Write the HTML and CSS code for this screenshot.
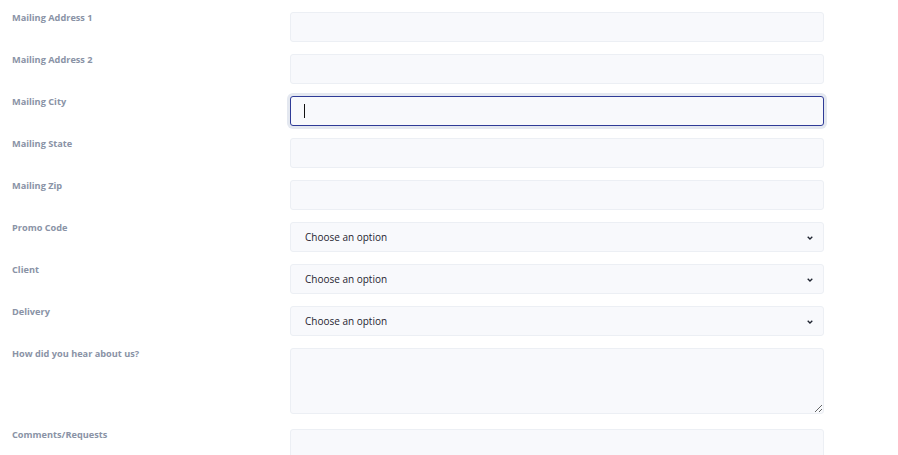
FILE: index.html
```html
<!DOCTYPE html>
<html>
<head>
<meta charset="utf-8">
<link rel="stylesheet" href="styles.css">
</head>
<body>
<form class="form">
  <div class="row"><label class="label">Mailing Address 1</label><input class="field" type="text"></div>
  <div class="row"><label class="label">Mailing Address 2</label><input class="field" type="text"></div>
  <div class="row"><label class="label">Mailing City</label><div class="wrap"><input class="field focused" type="text"><span class="caret"></span></div></div>
  <div class="row"><label class="label">Mailing State</label><input class="field" type="text"></div>
  <div class="row"><label class="label">Mailing Zip</label><input class="field" type="text"></div>
  <div class="row"><label class="label">Promo Code</label>
    <div class="select">Choose an option<svg class="chev" viewBox="0 0 6 4" width="6" height="4"><path d="M0.7 0.7 L3 3 L5.3 0.7" fill="none" stroke="#1f2430" stroke-width="1.3"/></svg></div></div>
  <div class="row"><label class="label">Client</label>
    <div class="select">Choose an option<svg class="chev" viewBox="0 0 6 4" width="6" height="4"><path d="M0.7 0.7 L3 3 L5.3 0.7" fill="none" stroke="#1f2430" stroke-width="1.3"/></svg></div></div>
  <div class="row"><label class="label">Delivery</label>
    <div class="select">Choose an option<svg class="chev" viewBox="0 0 6 4" width="6" height="4"><path d="M0.7 0.7 L3 3 L5.3 0.7" fill="none" stroke="#1f2430" stroke-width="1.3"/></svg></div></div>
  <div class="row tall"><label class="label">How did you hear about us?</label><textarea class="field area"></textarea></div>
  <div class="row"><label class="label">Comments/Requests</label><textarea class="field area"></textarea></div>
</form>
</body>
</html>
```
FILE: styles.css
```css
html, body {
  margin: 0;
  padding: 0;
  background: #ffffff;
  overflow: hidden;
}
body {
  font-family: "Open Sans", "Liberation Sans", sans-serif;
}
.form {
  padding: 12px 0 0 12px;
  display: flex;
  flex-direction: column;
  gap: 12px;
}
.row {
  display: grid;
  grid-template-columns: 278px 534px;
  align-items: start;
}
.row.tall {
  margin-bottom: 3px;
}
.label {
  font-size: 9.2px;
  line-height: 13px;
  font-weight: 700;
  color: #8a93a6;
  margin-top: -1px;
}
.wrap {
  position: relative;
}
.caret {
  position: absolute;
  left: 14px;
  top: 8px;
  width: 1px;
  height: 14px;
  background: #111;
}
.field {
  box-sizing: border-box;
  display: block;
  width: 534px;
  height: 30px;
  margin: 0;
  padding: 0 14px;
  background: #f8f9fc;
  border: 1px solid #eceff4;
  border-radius: 3px;
  font-family: "Open Sans", sans-serif;
  font-size: 11px;
  color: #1f2430;
  outline: none;
}
.field.focused {
  border-color: #2f3b97;
  box-shadow: 0 0 0 3px #e4e8f0;
}
.area {
  height: 66px;
  resize: vertical;
}
.select {
  box-sizing: border-box;
  width: 534px;
  height: 30px;
  padding: 0 10px 0 14px;
  background: #f8f9fc;
  border: 1px solid #eceff4;
  border-radius: 3px;
  font-size: 10px;
  font-weight: 500;
  color: #1f2430;
  display: flex;
  align-items: center;
  justify-content: space-between;
}
.chev {
  display: block;
  margin-top: 1px;
}
```
